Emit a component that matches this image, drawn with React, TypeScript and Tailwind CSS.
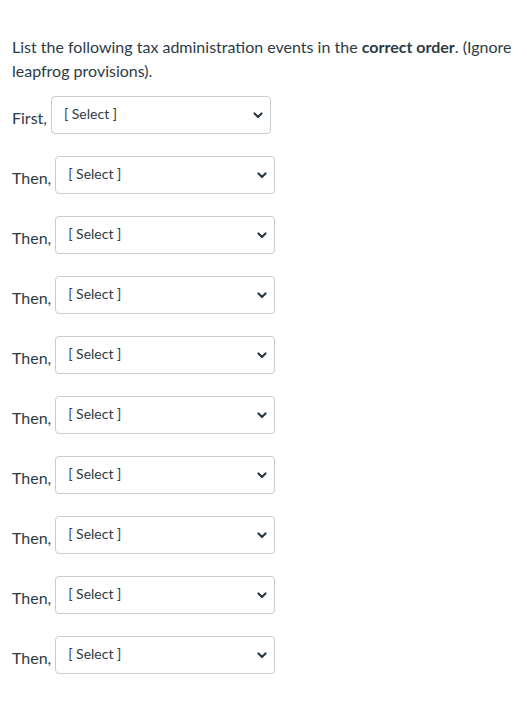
import React from "react";

function Chevron() {
  return (
    <svg width="10" height="7" viewBox="0 0 10 7" className="absolute right-[7px] top-[15px]">
      <path d="M1.5 1.5 L5 5 L8.5 1.5" fill="none" stroke="#2d3b45" strokeWidth="2.2" strokeLinecap="round" strokeLinejoin="round" />
    </svg>
  );
}

function Row({ label }: { label: string }) {
  return (
    <div className="flex items-start">
      <span className="mt-[10px] text-[16px] leading-[24px]">{label}</span>
      <div className="relative ml-[4px] h-[38px] w-[220px] rounded-[4px] border border-[#c7cdd1] bg-white pl-[12px] pt-[6px] text-[14px] leading-[21px] text-[#2d3b45]">
        [ Select ]
        <Chevron />
      </div>
    </div>
  );
}

export default function App() {
  const labels = ["First,", "Then,", "Then,", "Then,", "Then,", "Then,", "Then,", "Then,", "Then,", "Then,"];
  return (
    <div
      className="min-h-[726px] w-[527px] bg-white px-[12px] pt-[35px] text-[#2d3b45]"
      style={{ fontFamily: "Lato, 'Helvetica Neue', Arial, sans-serif" }}
    >
      <p className="w-[503px] text-[16px] leading-[24px]">
        List the following tax administration events in the <strong className="font-bold">correct order</strong>. (Ignore leapfrog provisions).
      </p>
      <div className="mt-[13px] flex flex-col gap-[22px]">
        {labels.map((l, i) => (
          <Row key={i} label={l} />
        ))}
      </div>
    </div>
  );
}
